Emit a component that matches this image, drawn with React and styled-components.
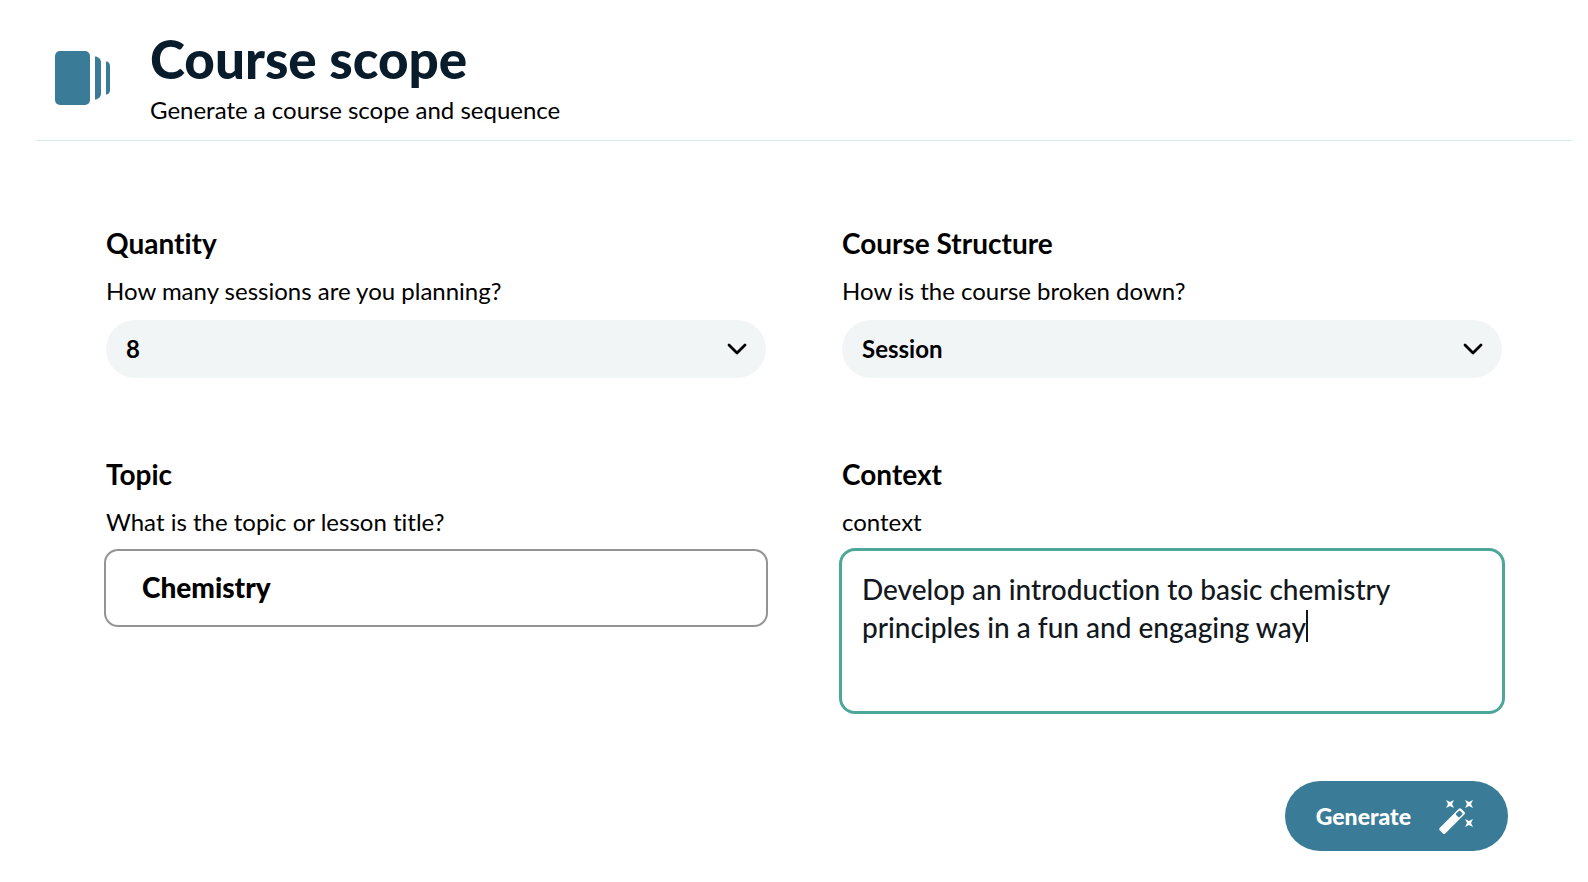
import React, { useState, useRef, useLayoutEffect } from 'react';
import styled, { createGlobalStyle } from 'styled-components';

const quantities = ['1', '2', '3', '4', '5', '6', '7', '8', '9', '10'];
const structures = ['Session', 'Week', 'Unit', 'Module'];

// Text styles that decide where the lines of the textarea break
const textStyles = ['fontFamily', 'fontSize', 'fontWeight', 'fontVariantLigatures', 'lineHeight', 'padding'];

const CardsIcon = () => (
  <svg width="56" height="56" viewBox="0 0 56 56" fill="#3a7c97" aria-hidden="true">
    <rect x="0" y="1" width="35" height="54" rx="5" />
    <path d="M40 6.500c3 0 6 2.500 6 6v31c0 3.500-3 6-6 6z" />
    <path d="M51 11.500c2.500 0 4 2 4 4.500v24c0 2.500-1.500 4.500-4 4.500z" />
  </svg>
);

const ChevronIcon = () => (
  <svg width="20" height="12" viewBox="0 0 20 12" fill="none" stroke="#000" strokeWidth="2.800" strokeLinecap="round" strokeLinejoin="round" aria-hidden="true">
    <path d="M2 2l8 8 8-8" />
  </svg>
);

const WandIcon = () => (
  <svg width="36" height="36" viewBox="9 8 36 36" fill="#fff" aria-hidden="true">
    <g transform="rotate(-45 12 41.200)">
      <rect x="11" y="37.200" width="30.500" height="8" rx="2" />
      <rect x="33.500" y="38.700" width="5.600" height="5" rx="1" fill="#3a7c97" />
    </g>
    <path d="M16 10l4 2 4-2-2 4 2 4-4-2-4 2 2-4z" />
    <path d="M35 10l4 2 4-2-2 4 2 4-4-2-4 2 2-4z" />
    <path d="M35 29l4 2 4-2-2 4 2 4-4-2-4 2 2-4z" />
  </svg>
);

const App = () => {
  const [quantity, setQuantity] = useState('8');
  const [structure, setStructure] = useState('Session');
  const [topic, setTopic] = useState('Chemistry');
  const [context, setContext] = useState('Develop an introduction to basic chemistry principles in a fun and engaging way');
  const [caret, setCaret] = useState({ left: 0, top: 0 });
  const contextRef = useRef(null);

  // Find where the text ends so the caret can be drawn there
  useLayoutEffect(() => {
    const place = () => {
      const area = contextRef.current;
      const style = window.getComputedStyle(area);
      const mirror = document.createElement('div');
      mirror.style.cssText = 'position:absolute;visibility:hidden;white-space:pre-wrap;box-sizing:border-box;';
      textStyles.forEach((name) => { mirror.style[name] = style[name]; });
      mirror.style.width = `${area.clientWidth}px`;
      mirror.textContent = context;
      const end = document.createElement('span');
      end.textContent = '\u200b';
      mirror.appendChild(end);
      document.body.appendChild(mirror);
      setCaret({ left: end.offsetLeft, top: end.offsetTop });
      document.body.removeChild(mirror);
    };
    place();
    window.addEventListener('resize', place);
    return () => window.removeEventListener('resize', place);
  }, [context]);

  return (
    <Page>
      <GlobalStyle />
      <Header>
        <CardsIcon />
        <Titles>
          <Title>Course scope</Title>
          <Subtitle>Generate a course scope and sequence</Subtitle>
        </Titles>
      </Header>

      <form onSubmit={(e) => e.preventDefault()}>
        <Fields>
          <Field>
            <Heading>Quantity</Heading>
            <Label htmlFor="quantity">How many sessions are you planning?</Label>
            <SelectBox>
              <Select id="quantity" value={quantity} onChange={(e) => setQuantity(e.target.value)}>
                {quantities.map((q) => <option key={q} value={q}>{q}</option>)}
              </Select>
              <ChevronIcon />
            </SelectBox>
          </Field>

          <Field>
            <Heading>Course Structure</Heading>
            <Label htmlFor="structure">How is the course broken down?</Label>
            <SelectBox>
              <Select id="structure" value={structure} onChange={(e) => setStructure(e.target.value)}>
                {structures.map((s) => <option key={s} value={s}>{s}</option>)}
              </Select>
              <ChevronIcon />
            </SelectBox>
          </Field>

          <Field>
            <Heading>Topic</Heading>
            <Label htmlFor="topic">What is the topic or lesson title?</Label>
            <TextInput id="topic" type="text" value={topic} onChange={(e) => setTopic(e.target.value)} />
          </Field>

          <Field>
            <Heading>Context</Heading>
            <Label htmlFor="context">context</Label>
            <AreaBox>
              <TextArea id="context" ref={contextRef} value={context} onChange={(e) => setContext(e.target.value)} />
              <Caret style={caret} />
            </AreaBox>
          </Field>
        </Fields>

        <Actions>
          <GenerateButton type="submit">
            Generate
            <WandIcon />
          </GenerateButton>
        </Actions>
      </form>
    </Page>
  );
};

export default App;


const GlobalStyle = createGlobalStyle`
  * {
    box-sizing: border-box;
  }
  body {
    margin: 0;
    background-color: #fff;
    color: #000;
    font-family: Lato, "Open Sans", sans-serif;
    font-variant-ligatures: none;
  }
  input, select, textarea, button {
    font-family: inherit;
    font-variant-ligatures: inherit;
  }
`;

const Page = styled.main`
  padding: 32px 16px 30px 36px;
`;

const Header = styled.header`
  display: flex;
  align-items: center;
  gap: 39px;
  height: 109px;
  padding: 0 0 17px 19px;
  border-bottom: 1px solid #d6ece8;
`;

const Titles = styled.div`
  display: flex;
  flex-direction: column;
  gap: 6px;
`;

const Title = styled.h1`
  margin: 0;
  font-size: 53px;
  line-height: 58px;
  font-weight: 900;
  color: #081c2c;
`;

const Subtitle = styled.p`
  margin: 0;
  font-size: 24px;
  line-height: 32px;
`;

const Fields = styled.div`
  display: grid;
  grid-template-columns: 1fr 1fr;
  gap: 78px 76px;
  padding: 84px 70px 0;
`;

const Field = styled.div`
  display: flex;
  flex-direction: column;
`;

const Heading = styled.h2`
  margin: 0 0 14px;
  font-size: 28px;
  line-height: 36px;
  font-weight: 700;
`;

const Label = styled.label`
  margin-bottom: 13px;
  font-size: 24px;
  line-height: 32px;
`;

const SelectBox = styled.div`
  display: grid;
  align-items: center;

  svg {
    grid-area: 1 / 1;
    justify-self: end;
    margin-right: 19px;
    pointer-events: none;
  }
`;

const Select = styled.select`
  grid-area: 1 / 1;
  width: 100%;
  height: 58px;
  padding: 0 48px 2px 20px;
  border: none;
  border-radius: 29px;
  appearance: none;
  background-color: #f1f5f6;
  color: #000;
  font-size: 24px;
  font-weight: 700;
`;

const TextInput = styled.input`
  width: 100%;
  height: 74px;
  padding: 0 36px 2px;
  border: none;
  border-radius: 12px;
  outline: 2px solid #949494;
  color: #000;
  font-size: 28px;
  font-weight: 900;
`;

const AreaBox = styled.div`
  position: relative;
  display: flex;
`;

const TextArea = styled.textarea`
  width: 100%;
  height: 160px;
  padding: 19px 20px;
  border: none;
  border-radius: 13px;
  outline: 3px solid #4da799;
  resize: none;
  color: #12181d;
  caret-color: transparent;
  font-size: 28px;
  line-height: 38px;
  font-weight: 500;
`;

const Caret = styled.span`
  position: absolute;
  width: 2px;
  height: 32px;
  background-color: #12181d;
  pointer-events: none;
`;

const Actions = styled.div`
  display: flex;
  justify-content: flex-end;
  padding: 70px 64px 0 0;
`;

const GenerateButton = styled.button`
  display: flex;
  align-items: center;
  gap: 28px;
  height: 70px;
  padding: 0 33px 0 31px;
  border: none;
  border-radius: 35px;
  background-color: #3a7c97;
  color: #fff;
  font-size: 23px;
  font-weight: 900;
  cursor: pointer;
`;
